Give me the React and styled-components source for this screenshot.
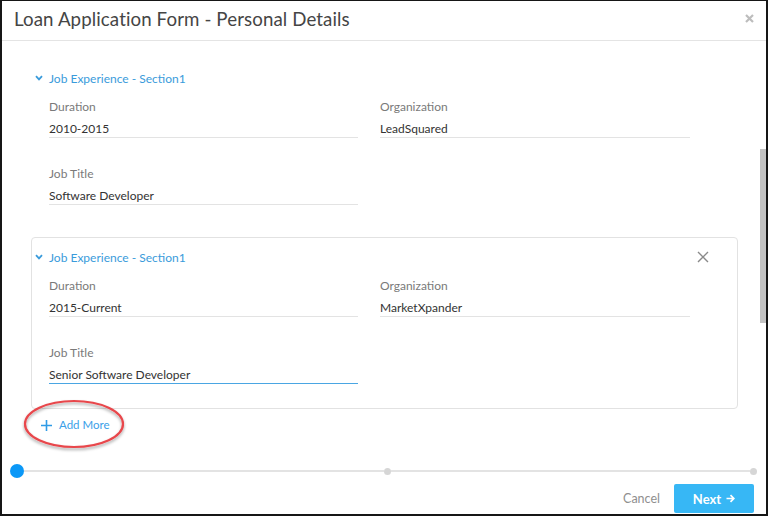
import React from "react";
import styled, { createGlobalStyle } from "styled-components";

const GlobalStyle = createGlobalStyle`
  html, body {
    margin: 0;
    padding: 0;
    background: #fff;
  }
  * {
    box-sizing: border-box;
  }
`;

const Frame = styled.div`
  width: 768px;
  height: 516px;
  display: flex;
  flex-direction: column;
  border: 2px solid #161616;
  border-top-width: 1px;
  font-family: Lato, "Open Sans", sans-serif;
  background: #fff;
  overflow: hidden;
`;

const Header = styled.div`
  height: 40px;
  flex: none;
  display: flex;
  align-items: center;
  justify-content: space-between;
  padding: 0 12px 4px 12px;
  border-bottom: 1px solid #e4e4e4;
`;

const Title = styled.h1`
  margin: 0;
  font-size: 18.7px;
  font-weight: 400;
  color: #454545;
  letter-spacing: 0.1px;
`;

const IconButton = styled.button`
  border: 0;
  background: none;
  padding: 0;
  display: flex;
  align-items: center;
  justify-content: center;
  cursor: pointer;
  color: ${(p) => p.$color || "#999"};
`;

const Body = styled.div`
  flex: 1;
  display: flex;
  min-height: 0;
  overflow: hidden;
`;

const Content = styled.div`
  flex: 1;
  padding: 17px 20px 0 29px;
  position: relative;
`;

const ScrollTrack = styled.div`
  width: 6px;
  flex: none;
`;

const ScrollThumb = styled.div`
  margin-top: 108px;
  height: 174px;
  background: #c3c3c3;
`;

const Section = styled.div`
  width: 707px;
  padding: 10px 28px 24px 2px;
  border: 1px solid ${(p) => (p.$bordered ? "#e2e2e2" : "transparent")};
  border-radius: 4px;
  margin-bottom: 7px;
`;

const SectionHeader = styled.div`
  height: 18px;
  display: flex;
  align-items: center;
  justify-content: space-between;
`;

const SectionTitle = styled.div`
  display: flex;
  align-items: center;
  gap: 6px;
  padding-left: 1px;
  font-size: 12px;
  color: #3a9bdb;
`;

const FieldGrid = styled.div`
  display: grid;
  grid-template-columns: 309px 310px;
  column-gap: 22px;
  row-gap: 28px;
  margin: 12px 0 0 15px;
`;

const Field = styled.div`
  display: flex;
  flex-direction: column;
  gap: 6px;
`;

const Label = styled.div`
  font-size: 12px;
  line-height: 16px;
  color: #7a7a7a;
`;

const Value = styled.div`
  font-size: 12px;
  line-height: 16px;
  color: #333;
  border-bottom: 1px solid ${(p) => (p.$active ? "#4aa6e3" : "#e3e3e3")};
`;

const AddMoreRow = styled.div`
  position: relative;
  width: 100px;
  margin: 6px 0 0 10px;
`;

const AddMore = styled.button`
  border: 0;
  background: none;
  padding: 0;
  display: flex;
  align-items: center;
  gap: 7px;
  font-family: inherit;
  font-size: 11.5px;
  line-height: 18px;
  color: #3aa0e8;
  cursor: pointer;
`;

const Highlight = styled.svg`
  position: absolute;
  left: -17px;
  top: -16px;
  overflow: visible;
  pointer-events: none;
`;

const Stepper = styled.div`
  flex: none;
  height: 14px;
  display: flex;
  align-items: center;
  padding: 0 9px 0 8px;
  margin-bottom: 6px;
`;

const StepDot = styled.div`
  flex: none;
  width: ${(p) => (p.$active ? "14px" : "7px")};
  height: ${(p) => (p.$active ? "14px" : "7px")};
  border-radius: 50%;
  background: ${(p) => (p.$active ? "#0b98f7" : "#d6d6d6")};
`;

const StepLine = styled.div`
  flex: 1;
  height: 2px;
  background: #e3e3e3;
`;

const Footer = styled.div`
  flex: none;
  height: 29px;
  margin-bottom: 1px;
  display: flex;
  justify-content: flex-end;
  align-items: center;
  gap: 14px;
  padding-right: 12px;
`;

const CancelButton = styled.button`
  border: 0;
  background: none;
  padding: 0;
  font-family: inherit;
  font-size: 12.5px;
  color: #8f8f8f;
  cursor: pointer;
`;

const NextButton = styled.button`
  width: 80px;
  height: 29px;
  border: 0;
  border-radius: 2px;
  background: #37b7f5;
  color: #fff;
  font-family: inherit;
  font-weight: 700;
  font-size: 13px;
  display: flex;
  align-items: center;
  justify-content: center;
  gap: 5px;
  cursor: pointer;
`;

const Chevron = () => (
  <svg width="8" height="6" viewBox="0 0 8 6">
    <path d="M1 1.2 L4 4.4 L7 1.2" fill="none" stroke="#3a9bdb" strokeWidth="1.8" />
  </svg>
);

const sections = [
  {
    id: 1,
    bordered: false,
    fields: [
      { label: "Duration", value: "2010-2015" },
      { label: "Organization", value: "LeadSquared" },
      { label: "Job Title", value: "Software Developer" },
    ],
  },
  {
    id: 2,
    bordered: true,
    removable: true,
    fields: [
      { label: "Duration", value: "2015-Current" },
      { label: "Organization", value: "MarketXpander" },
      { label: "Job Title", value: "Senior Software Developer", active: true },
    ],
  },
];

const App = () => {
  return (
    <>
      <GlobalStyle />
      <Frame>
        <Header>
          <Title>Loan Application Form - Personal Details</Title>
          <IconButton $color="#bdbdbd" aria-label="Close">
            <svg width="9" height="9" viewBox="0 0 9 9">
              <path d="M1 1 L8 8 M8 1 L1 8" stroke="currentColor" strokeWidth="2.2" />
            </svg>
          </IconButton>
        </Header>
        <Body>
          <Content>
            {sections.map((section) => (
              <Section key={section.id} $bordered={section.bordered}>
                <SectionHeader>
                  <SectionTitle>
                    <Chevron />
                    Job Experience - Section1
                  </SectionTitle>
                  {section.removable && (
                    <IconButton $color="#8a8a8a" aria-label="Remove">
                      <svg width="12" height="12" viewBox="0 0 12 12">
                        <path d="M1 1 L11 11 M11 1 L1 11" stroke="currentColor" strokeWidth="1.4" />
                      </svg>
                    </IconButton>
                  )}
                </SectionHeader>
                <FieldGrid>
                  {section.fields.map((field) => (
                    <Field key={field.label}>
                      <Label>{field.label}</Label>
                      <Value $active={field.active}>{field.value}</Value>
                    </Field>
                  ))}
                </FieldGrid>
              </Section>
            ))}
            <AddMoreRow>
              <AddMore>
                <svg width="11" height="11" viewBox="0 0 11 11">
                  <path d="M5.5 0 V11 M0 5.5 H11" stroke="#2f9be6" strokeWidth="1.6" />
                </svg>
                Add More
              </AddMore>
              <Highlight width="100" height="48" viewBox="0 0 100 48">
                <defs>
                  <filter id="ring-shadow" x="-20%" y="-30%" width="140%" height="160%">
                    <feDropShadow dx="0" dy="2" stdDeviation="1.6" floodColor="#000" floodOpacity="0.35" />
                  </filter>
                </defs>
                <ellipse
                  cx="50"
                  cy="24"
                  rx="49"
                  ry="23"
                  fill="none"
                  stroke="#e8474c"
                  strokeWidth="2.2"
                  filter="url(#ring-shadow)"
                />
              </Highlight>
            </AddMoreRow>
          </Content>
          <ScrollTrack>
            <ScrollThumb />
          </ScrollTrack>
        </Body>
        <Stepper>
          <StepDot $active />
          <StepLine />
          <StepDot />
          <StepLine />
          <StepDot />
        </Stepper>
        <Footer>
          <CancelButton>Cancel</CancelButton>
          <NextButton>
            Next
            <svg width="9" height="9" viewBox="0 0 9 9">
              <path d="M0.5 4.5 H7.5 M4.5 1.2 L7.8 4.5 L4.5 7.8" fill="none" stroke="#fff" strokeWidth="1.7" />
            </svg>
          </NextButton>
        </Footer>
      </Frame>
    </>
  );
};

export default App;
